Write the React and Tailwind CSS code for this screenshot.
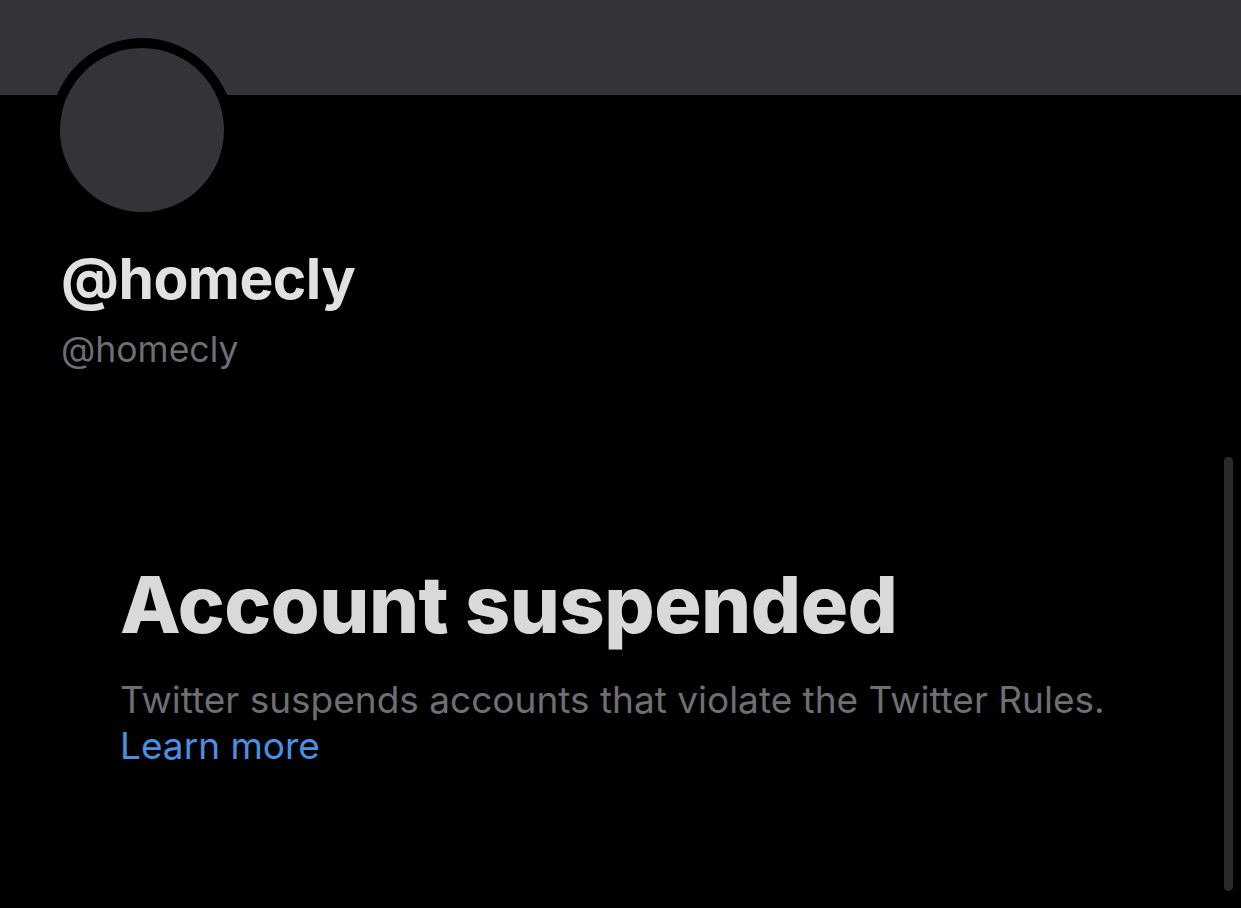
export default function App() {
  return (
    <div className="relative w-[1241px] h-[908px] overflow-hidden bg-black font-['Inter','Liberation_Sans',sans-serif]">
      <div className="h-[95px] bg-[#333438]" />
      <div className="absolute left-[50px] top-[38px] w-[184px] h-[184px] rounded-full bg-black p-[10px]">
        <div className="w-full h-full rounded-full bg-[#333438]" />
      </div>
      <div className="pl-[61px] pt-[152px]">
        <h2 className="text-[57px] leading-[64px] font-bold text-[#e1e1e1] tracking-[-0.5px]">@homecly</h2>
        <p className="mt-[19px] text-[35.5px] leading-[40px] text-[#6e6e73]">@homecly</p>
      </div>
      <div className="pl-[120px] pt-[189px]">
        <h1 className="text-[79px] leading-[90px] font-extrabold text-[#d9d9d9] tracking-[-0.5px]">Account suspended</h1>
        <p className="mt-[28px] text-[37px] leading-[46px] text-[#6e6e73]">
          Twitter suspends accounts that violate the Twitter Rules.
          <br />
          <a className="text-[#4a90e2]">Learn more</a>
        </p>
      </div>
      <div className="absolute right-[8px] top-[457px] w-[9px] h-[434px] rounded-full bg-[#2a2a2a]" />
    </div>
  );
}
